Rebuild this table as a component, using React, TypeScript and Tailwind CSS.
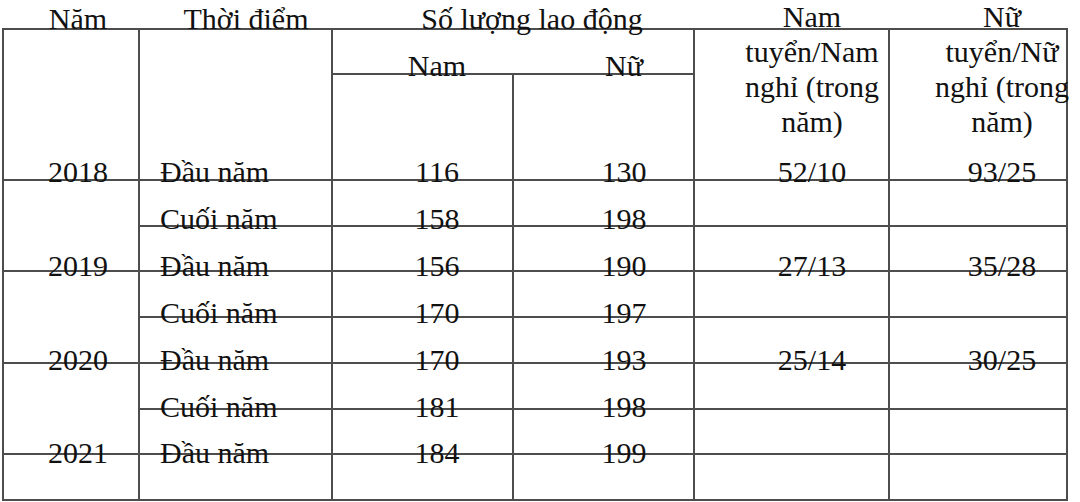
const body = [
  { year: "2018", time: "Đầu năm", nam: "116", nu: "130", namRate: "52/10", nuRate: "93/25" },
  { year: "", time: "Cuối năm", nam: "158", nu: "198", namRate: "", nuRate: "" },
  { year: "2019", time: "Đầu năm", nam: "156", nu: "190", namRate: "27/13", nuRate: "35/28" },
  { year: "", time: "Cuối năm", nam: "170", nu: "197", namRate: "", nuRate: "" },
  { year: "2020", time: "Đầu năm", nam: "170", nu: "193", namRate: "25/14", nuRate: "30/25" },
  { year: "", time: "Cuối năm", nam: "181", nu: "198", namRate: "", nuRate: "" },
  { year: "2021", time: "Đầu năm", nam: "184", nu: "199", namRate: "", nuRate: "" },
];

const cell = "bg-white";

function TableLines() {
  // body rows: the "Năm" column is merged per year (2 rows), last year single
  const cells: JSX.Element[] = [];
  body.forEach((r, i) => {
    if (r.year) {
      const span = i + 1 < body.length ? "row-span-2" : "";
      cells.push(<div key={`y${i}`} className={`${cell} ${span}`} />);
    }
    for (let c = 0; c < 5; c++) {
      cells.push(<div key={`c${i}-${c}`} className={cell} />);
    }
  });

  return (
    <div className="col-start-1 row-start-1 self-start mt-[28px] ml-[2px] w-[1066px] h-[473px] grid grid-cols-[134px_191px_179px_179px_193px_176px] grid-rows-[43px_104px_repeat(7,1fr)] gap-[2px] p-[2px] bg-[#4d4d4d]">
      <div className={`${cell} row-span-2`} />
      <div className={`${cell} row-span-2`} />
      <div className={`${cell} col-span-2`} />
      <div className={`${cell} row-span-2`} />
      <div className={`${cell} row-span-2`} />
      <div className={cell} />
      <div className={cell} />
      {cells}
    </div>
  );
}

function TextLayer() {
  return (
    <div className="col-start-1 row-start-1 self-start mt-[1px] ml-[3px] grid grid-cols-[136px_193px_181px_181px_195px_178px] grid-rows-[153.4px_repeat(7,46.83px)] text-[30px] leading-[35px] text-[#111] whitespace-nowrap">
      <div className="flex justify-center pl-[14px]">Năm</div>
      <div className="flex justify-center pl-[21px]">Thời điểm</div>
      <div className="col-span-2 flex flex-col">
        <div className="flex justify-center pl-[38px]">Số lượng lao động</div>
        <div className="mt-[12px] grid grid-cols-2">
          <div className="flex justify-center pl-[29px]">Nam</div>
          <div className="flex justify-center pl-[41px]">Nữ</div>
        </div>
      </div>
      <div className="-mt-[2px] flex flex-col items-center pl-[41px]">
        <span>Nam</span>
        <span>tuyển/Nam</span>
        <span>nghỉ (trong</span>
        <span>năm)</span>
      </div>
      <div className="-mt-[2px] flex flex-col items-center pl-[48px]">
        <span>Nữ</span>
        <span>tuyển/Nữ</span>
        <span>nghỉ (trong</span>
        <span>năm)</span>
      </div>

      {body.map((r, i) => (
        <div key={i} className="contents">
          <div className="flex justify-center pl-[14px]">{r.year}</div>
          <div className="pl-[21px]">{r.time}</div>
          <div className="flex justify-center pl-[29px]">{r.nam}</div>
          <div className="flex justify-center pl-[41px]">{r.nu}</div>
          <div className="flex justify-center pl-[41px]">{r.namRate}</div>
          <div className="flex justify-center pl-[48px]">{r.nuRate}</div>
        </div>
      ))}
    </div>
  );
}

export default function App() {
  return (
    <div className="w-[1080px] h-[502px] overflow-hidden bg-white grid font-[Liberation_Serif,DejaVu_Serif,serif]">
      <TableLines />
      <TextLayer />
    </div>
  );
}
